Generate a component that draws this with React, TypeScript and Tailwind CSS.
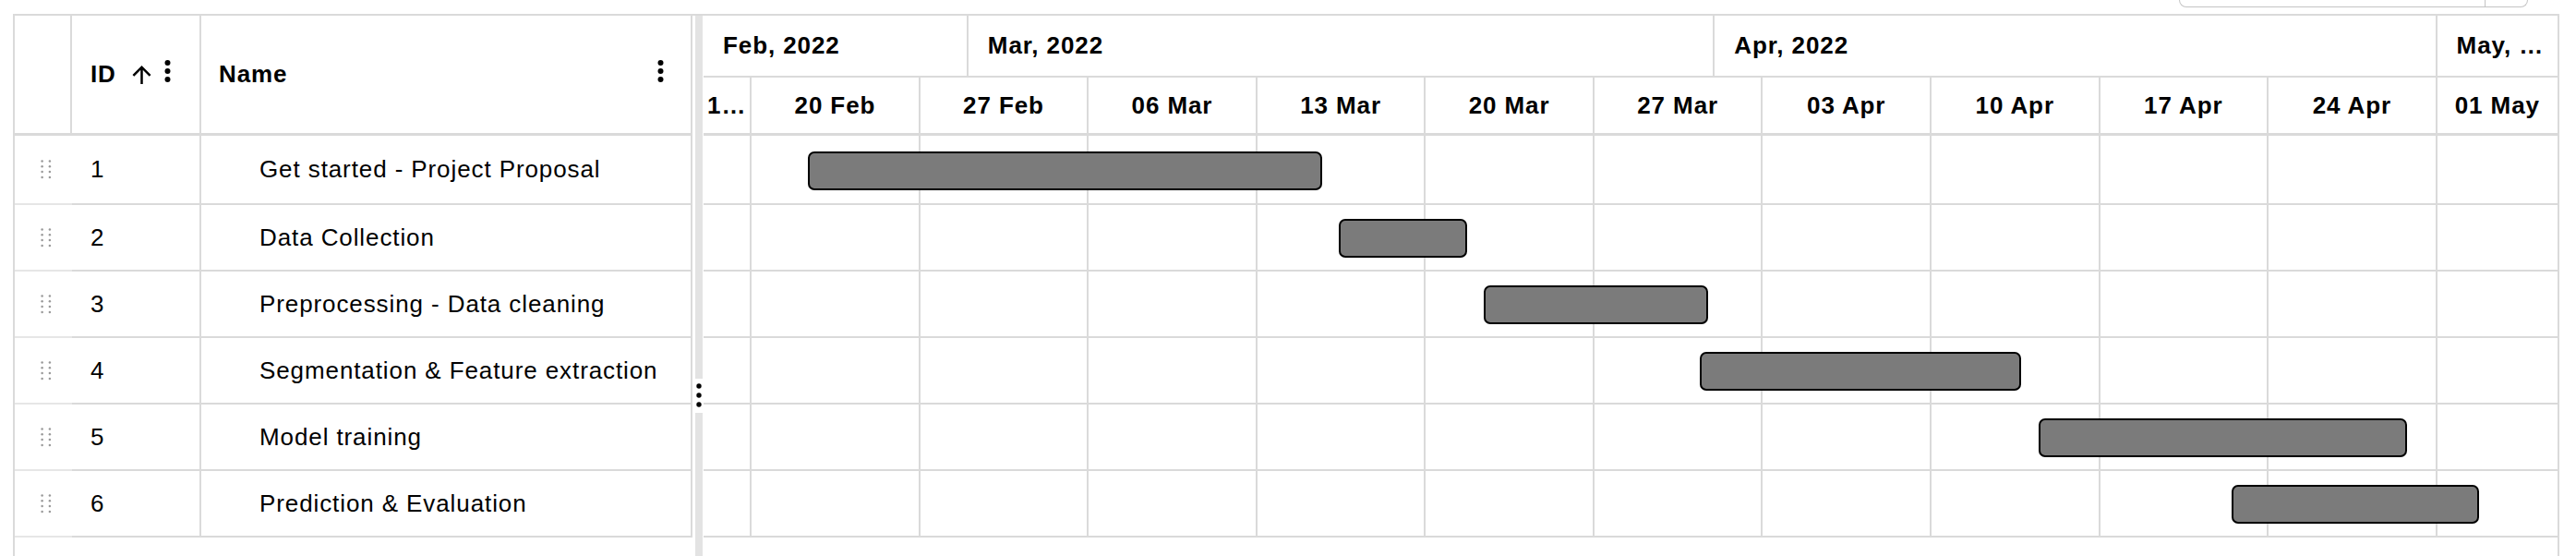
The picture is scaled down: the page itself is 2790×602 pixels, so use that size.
import React from "react";

const weeks = ["13 Feb", "20 Feb", "27 Feb", "06 Mar", "13 Mar", "20 Mar", "27 Mar", "03 Apr", "10 Apr", "17 Apr", "24 Apr", "01 May"];
const months = ["Feb, 2022", "Mar, 2022", "Apr, 2022", "May, 2022"];

const tasks = [
  { id: 1, name: "Get started - Project Proposal", left: 113, width: 557 },
  { id: 2, name: "Data Collection", left: 688, width: 139 },
  { id: 3, name: "Preprocessing - Data cleaning", left: 845, width: 243 },
  { id: 4, name: "Segmentation & Feature extraction", left: 1079, width: 348 },
  { id: 5, name: "Model training", left: 1446, width: 399 },
  { id: 6, name: "Prediction & Evaluation", left: 1655, width: 268 },
];

const WEEK_COLS = "grid grid-cols-[minmax(0,2fr)_repeat(10,minmax(0,7fr))_minmax(0,5fr)]";
const MONTH_COLS = "grid grid-cols-[minmax(0,11fr)_minmax(0,31fr)_minmax(0,30fr)_minmax(0,5fr)]";

function Kebab() {
  return (
    <svg width="7" height="24" viewBox="0 0 7 24" className="shrink-0">
      <circle cx="3.5" cy="3" r="3" fill="#000" />
      <circle cx="3.5" cy="12" r="3" fill="#000" />
      <circle cx="3.5" cy="21" r="3" fill="#000" />
    </svg>
  );
}

function ArrowUp() {
  return (
    <svg width="21" height="20" viewBox="4 4 16 16" className="shrink-0">
      <path d="M4 12l1.41 1.41L11 7.83V20h2V7.83l5.58 5.59L20 12l-8-8-8 8z" fill="#000" />
    </svg>
  );
}

function DragDots() {
  return (
    <svg width="12" height="21" viewBox="0 0 12 21">
      {[1.5, 7.3, 13.1, 18.9].map((cy) => (
        <React.Fragment key={cy}>
          <circle cx="1.6" cy={cy} r="1.25" fill="#999" />
          <circle cx="9.9" cy={cy} r="1.25" fill="#999" />
        </React.Fragment>
      ))}
    </svg>
  );
}

export default function App() {
  return (
    <div className="w-[2790px] h-[602px] overflow-hidden bg-white text-black font-['Liberation_Sans',Arial,sans-serif] text-[26px] tracking-[0.9px]">
      {/* toolbar remnant */}
      <div className="h-[15px] flex justify-end pr-[52px]">
        <div className="h-[8px] w-[378px] flex border-x border-b border-[#c4c4c4] rounded-b-[8px]">
          <div className="w-[331px] border-r border-[#c4c4c4]" />
        </div>
      </div>

      <div className="ml-[14px] w-[2758px] h-[700px] border-2 border-[#dadada] flex">
        {/* left grid pane */}
        <div className="w-[734px] shrink-0 flex flex-col border-r-2 border-[#dadada] self-start">
          <div className="h-[130px] flex border-b-[3px] border-[#dadada]">
            <div className="w-[62px] border-r-2 border-[#dadada]" />
            <div className="w-[140px] border-r-2 border-[#dadada] flex items-center pl-[20px] font-bold">
              <span>ID</span>
              <span className="ml-[17px]"><ArrowUp /></span>
              <span className="ml-[14px] mb-[8px] flex"><Kebab /></span>
            </div>
            <div className="flex-1 flex items-center pl-[19px] font-bold">
              <span>Name</span>
              <span className="ml-auto mr-[29px] mb-[8px] flex"><Kebab /></span>
            </div>
          </div>
          {tasks.map((t, i) => (
            <div key={t.id} className={`flex ${i === 0 ? "h-[75px]" : "h-[72px]"}`}>
              <div className="w-[62px] flex items-center pl-[28px] border-b-2 border-[#e6e6e6]">
                <DragDots />
              </div>
              <div className="w-[140px] flex items-center pl-[20px] border-b-2 border-r-2 border-[#dadada]">
                {t.id}
              </div>
              <div className="flex-1 flex items-center pl-[63px] border-b-2 border-[#dadada] whitespace-nowrap">
                {t.name}
              </div>
            </div>
          ))}
        </div>

        {/* splitter */}
        <div className="w-[12px] shrink-0 relative">
          <div className="ml-[3px] w-[8px] h-full bg-[#e3e3e3]" />
          <div className="absolute left-0 top-[393px] w-full h-[37px] bg-white flex justify-center pt-[5px] pl-[2px]">
            <svg width="6" height="26" viewBox="0 0 6 26">
              <circle cx="3" cy="3" r="2.7" fill="#000" />
              <circle cx="3" cy="13" r="2.7" fill="#000" />
              <circle cx="3" cy="23" r="2.7" fill="#000" />
            </svg>
          </div>
        </div>

        {/* gantt pane */}
        <div className="flex-1 flex flex-col">
          <div className="h-[130px] flex flex-col border-b-[3px] border-[#dadada] font-bold">
            <div className={`${MONTH_COLS} h-[67px] border-b-2 border-[#dadada]`}>
              {months.map((m, i) => (
                <div
                  key={m}
                  className={`flex items-center pl-[21px] pr-[8px] min-w-0 ${i < months.length - 1 ? "border-r-2 border-[#dadada]" : ""}`}
                >
                  <span className="truncate">{m}</span>
                </div>
              ))}
            </div>
            <div className={`${WEEK_COLS} flex-1`}>
              {weeks.map((w, i) => (
                <div
                  key={w}
                  className={`flex items-center min-w-0 px-[4px] ${i < weeks.length - 1 ? "border-r-2 border-[#dadada]" : ""}`}
                >
                  <span className="block w-full truncate text-center">{w}</span>
                </div>
              ))}
            </div>
          </div>
          {tasks.map((t, i) => (
            <div
              key={t.id}
              className={`relative border-b-2 border-[#dadada] ${i === 0 ? "h-[75px]" : "h-[72px]"}`}
            >
              <div className={`${WEEK_COLS} h-full`}>
                {weeks.map((w, j) => (
                  <div key={w} className={j < weeks.length - 1 ? "border-r-2 border-[#dadada]" : ""} />
                ))}
              </div>
              <div
                className="absolute top-[calc(50%+1px)] -translate-y-1/2 h-[42px] rounded-[7px] border-2 border-black bg-[#7b7b7b]"
                style={{ left: t.left, width: t.width }}
              />
            </div>
          ))}
        </div>
      </div>
    </div>
  );
}
